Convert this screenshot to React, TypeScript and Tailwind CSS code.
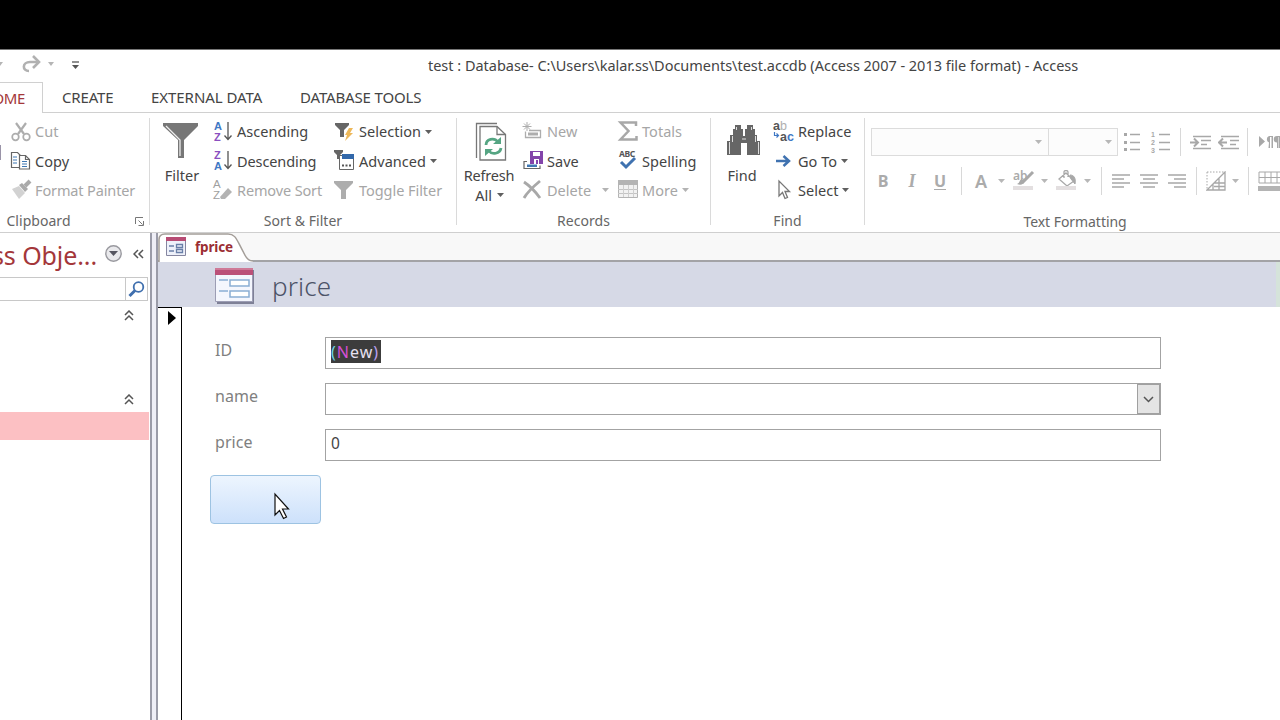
import type { ReactNode } from 'react';

export default function App() {
  return (
    <div className="w-[1280px] h-[720px] overflow-hidden flex flex-col bg-white font-['Noto_Sans','Liberation_Sans',sans-serif] text-[#444444] whitespace-nowrap">
      <div className="h-[49px] shrink-0 bg-black" />
      <TitleBar />
      <Tabs />
      <Ribbon />
      <div className="flex flex-1 min-h-0">
        <NavPane />
        <div className="w-[8px] shrink-0 border-x-2 border-[#9a9ba8] bg-[#eeeef6]" />
        <Document />
      </div>
    </div>
  );
}

function TitleBar() {
  return (
    <div className="h-[33px] shrink-0 flex items-center border-t border-[#777777]">
      <svg className="w-[90px] h-[32px] shrink-0" viewBox="0 0 90 32" fill="none">
        <path d="M-3 12h6l-3 4z" fill="#b5b5b5" />
        <path d="M39 12H30c-8 0-8 9-1 9" stroke="#b1b1b1" strokeWidth="2.6" />
        <path d="M33 6l6 6-6 6" stroke="#b1b1b1" strokeWidth="2.6" />
        <path d="M48 12h6l-3 4z" fill="#b5b5b5" />
        <path d="M72 12h7" stroke="#555555" strokeWidth="1.3" />
        <path d="M72 15h7l-3.5 4z" fill="#555555" />
      </svg>
      <span className="ml-[338px] text-[14.5px] tracking-[-0.02px]">
        test : Database- C:\Users\kalar.ss\Documents\test.accdb (Access 2007 - 2013 file format) - Access
      </span>
    </div>
  );
}

function Tabs() {
  return (
    <div className="h-[31px] shrink-0 flex text-[15px]">
      <div className="w-[43px] shrink-0 border-t border-r border-[#d0d0d0] flex items-center justify-end pr-[17px] text-[#a4373a] tracking-[-0.4px]">
        HOME
      </div>
      <div className="flex flex-1 items-center border-b border-[#d0d0d0] pt-[1px]">
        <span className="w-[89px] pl-[19px] tracking-[-0.15px]">CREATE</span>
        <span className="w-[149px] pl-[19px] tracking-[-0.05px]">EXTERNAL DATA</span>
        <span className="pl-[19px] tracking-[-0.15px]">DATABASE TOOLS</span>
      </div>
    </div>
  );
}

function Separator() {
  return <div className="w-px h-[107px] mt-[5px] shrink-0 bg-[#dadada]" />;
}

function Group({ title, className, children }: { title: string; className: string; children: ReactNode }) {
  return (
    <div className={`shrink-0 flex flex-col pt-[4px] ${className}`}>
      <div className="flex h-[90px] shrink-0">{children}</div>
      <div className="h-[26px] pt-[2px] flex items-center justify-center text-[14px] tracking-[0.05px] text-[#666666]">
        {title}
      </div>
    </div>
  );
}

function Item({
  icon,
  label,
  off,
  arrow,
  spacing = 'tracking-[0.03px]',
  arrowGap = 'ml-[4px]',
}: {
  icon: ReactNode;
  label: string;
  off?: boolean;
  arrow?: boolean;
  spacing?: string;
  arrowGap?: string;
}) {
  return (
    <div className={`flex items-center h-[29.4px] ${off ? 'text-[#a6a6a6]' : 'text-[#444444]'}`}>
      <svg className="w-[22px] h-[22px] mr-[3px] shrink-0 overflow-visible" viewBox="0 0 22 22" fill="none">
        {icon}
      </svg>
      <span className={`pt-[1px] text-[14.5px] ${spacing}`}>{label}</span>
      {arrow && <Arrow className={arrowGap} />}
    </div>
  );
}

function Arrow({ className = '' }: { className?: string }) {
  return (
    <svg className={`w-[7px] h-[4px] shrink-0 opacity-85 ${className}`} viewBox="0 0 7 4">
      <path d="M0 0h7L3.5 4z" fill="currentColor" />
    </svg>
  );
}

function Ribbon() {
  return (
    <div className="h-[120px] shrink-0 flex border-b border-[#cfcfcf]">
      <Group title="Clipboard" className="w-[149px] relative [&>div:last-child]:pr-[72px]">
        <div className="w-[10px] pt-[28px]">
          <div className="w-px h-[15px] bg-[#9a94a8]" />
        </div>
        <div>
          <Item icon={cut} label="Cut" off />
          <Item icon={copy} label="Copy" />
          <Item icon={painter} label="Format Painter" off spacing="tracking-[-0.13px]" />
        </div>
        <svg className="absolute left-[134px] top-[103px] w-[11px] h-[10px]" viewBox="0 0 11 10" fill="none" stroke="#777777">
          <path d="M1.5 8V1.5H9M4.500 4.500l4 4M9.500 5v4.500h-5" />
        </svg>
      </Group>
      <Separator />
      <Group title="Sort & Filter" className="w-[306px]">
        <div className="w-[62px] flex flex-col items-center pt-[6px]">
          <svg className="w-[36px] h-[36px]" viewBox="0 0 36 36">
            <path d="M0 0h35v3L21 17v18h-6V17L0 3z" fill="#777777" />
            <path d="M3 3l14 14v16" fill="none" stroke="#eeeeee" strokeWidth="1.3" />
          </svg>
          <span className="text-[14.5px] leading-[20px] mt-[6px] ml-[2px]">Filter</span>
        </div>
        <div className="w-[122px]">
          <Item icon={sortIcon('A', 'Z', '#3f78c4', '#8b4fc0')} label="Ascending" />
          <Item icon={sortIcon('Z', 'A', '#8b4fc0', '#3f78c4')} label="Descending" spacing="tracking-[-0.1px]" />
          <Item icon={removeSort} label="Remove Sort" off spacing="tracking-[-0.13px]" />
        </div>
        <div>
          <Item icon={selection} label="Selection" arrow />
          <Item icon={advanced} label="Advanced" arrow />
          <Item icon={toggleFilter} label="Toggle Filter" off spacing="tracking-[-0.05px]" />
        </div>
      </Group>
      <Separator />
      <Group title="Records" className="w-[253px]">
        <div className="w-[65px] flex flex-col items-center pt-[5px]">
          <svg className="w-[32px] h-[40px] ml-[2px]" viewBox="0 0 32 40" fill="none">
            <path d="M1.500 36V1.500H22" stroke="#777777" strokeWidth="1.300" />
            <path d="M5 4.500h17l8.500 8v25.500H5z" fill="#fff" stroke="#777777" strokeWidth="1.300" />
            <path d="M22 4.500v8h8.500" stroke="#777777" strokeWidth="1.300" />
            <path d="M11 23c0-6 8-8 12-3M26 26c-1 6-9 7-12 3" stroke="#55a583" strokeWidth="2.800" />
            <path d="M26 15v7h-8zM10 34v-7h8z" fill="#55a583" />
          </svg>
          <span className="text-[14.5px] leading-[20px] mt-[3px] -ml-px tracking-[-0.2px]">Refresh</span>
          <span className="text-[14.5px] leading-[20px] flex items-center">
            All
            <Arrow className="ml-[5px]" />
          </span>
        </div>
        <div className="w-[95px]">
          <Item icon={newRecord} label="New" off />
          <Item icon={save} label="Save" />
          <Item icon={deleteIcon} label="Delete" off arrow arrowGap="ml-[11px]" />
        </div>
        <div>
          <Item icon={totals} label="Totals" off />
          <Item icon={spelling} label="Spelling" />
          <Item icon={more} label="More" off arrow />
        </div>
      </Group>
      <Separator />
      <Group title="Find" className="w-[153px]">
        <div className="w-[62px] flex flex-col items-center pt-[8px]">
          <svg className="w-[34px] h-[32px] ml-[3px]" viewBox="0 0 34 32" fill="#666666">
            <path d="M8 0h6v4h2v7h2V4h2V0h6v4h2v6h2v6h3v14H20V18h-6v12H0V16h3v-6h3V4h2z" />
            <path d="M2.500 17v12M5.500 11v6M31.500 17v12M28.500 11v6M9.500 2v3M24.500 2v3M15 14h4" stroke="#dddddd" />
          </svg>
          <span className="text-[14.5px] leading-[20px] mt-[8px]">Find</span>
        </div>
        <div>
          <Item icon={replace} label="Replace" />
          <Item icon={goTo} label="Go To" arrow />
          <Item icon={selectIcon} label="Select" arrow />
        </div>
      </Group>
      <Separator />
      <TextFormatting />
    </div>
  );
}

function Cell({ className, children }: { className: string; children: ReactNode }) {
  return <div className={`h-full shrink-0 flex items-center justify-center ${className}`}>{children}</div>;
}

function Bar() {
  return <div className="w-px h-[28px] shrink-0 bg-[#d8d8d8]" />;
}

function TextFormatting() {
  return (
    <div className="w-[415px] shrink-0 overflow-hidden text-[#ababab]">
      <div className="h-[28px] mt-[15px] flex items-center">
        <div className="ml-[6px] w-[178px] h-[28px] shrink-0 border border-[#dcdcdc] bg-[#fcfcfc] flex items-center justify-end pr-[6px]">
          <Arrow />
        </div>
        <div className="w-[69px] h-[28px] shrink-0 border border-l-0 border-[#dcdcdc] bg-[#fcfcfc] flex items-center justify-end pr-[5px]">
          <Arrow />
        </div>
        <Cell className="w-[28px]">
          <svg width="18" height="20" fill="none" stroke="#a8a8a8" strokeWidth="1.3">
            <path d="M7 2.500h10M7 10.500h10M7 17.500h10" />
            <path d="M1 2.500h3M1 10.500h3M1 17.500h3" strokeWidth="3" />
          </svg>
        </Cell>
        <Cell className="w-[28px]">
          <svg width="19" height="20" fill="none" stroke="#a8a8a8" strokeWidth="1.3" className="overflow-visible font-['Liberation_Sans',sans-serif]">
            <path d="M8 2.500h11M8 10.500h11M8 17.500h11" />
            <text x="0" y="5" fontSize="7" fontWeight="700" fill="#a8a8a8" stroke="none">1</text>
            <text x="0" y="13" fontSize="7" fontWeight="700" fill="#a8a8a8" stroke="none">2</text>
            <text x="0" y="21" fontSize="7" fontWeight="700" fill="#a8a8a8" stroke="none">3</text>
          </svg>
        </Cell>
        <Cell className="w-[6px]">{null}</Cell>
        <Bar />
        <Cell className="w-[38px]">
          <svg width="21" height="15" fill="none" stroke="#a8a8a8" strokeWidth="1.3">
            <path d="M3 1.500h18M11 5.500h10M11 9.500h6M3 13.500h18" />
            <path d="M0 7.500h8M4 3.500l4 4-4 4" strokeWidth="2" />
          </svg>
        </Cell>
        <Cell className="w-[18px]">
          <svg width="21" height="15" fill="none" stroke="#a8a8a8" strokeWidth="1.3" className="shrink-0">
            <path d="M3 1.500h18M12 5.500h9M12 9.500h6M3 13.500h18" />
            <path d="M9 7.500H1M5 3.500l-4 4 4 4" strokeWidth="2" />
          </svg>
        </Cell>
        <Cell className="w-[10px]">{null}</Cell>
        <Bar />
        <svg width="22" height="14" className="ml-[11px] shrink-0" fill="#a8a8a8">
          <path d="M0 1l6 5.500L0 12zM10 7.500a3.500 3.500 0 0 1 0-6.500h4v12h-1.500V2H11v11H9.500zM18 7.500a3 3 0 0 1 0-6.500h3v12h-1.500V2H19v11h-1z" />
        </svg>
      </div>
      <div className="h-[28px] mt-[11px] pl-[1px] flex items-center text-[16px] font-bold">
        <Cell className="w-[34px]">
          <span className="font-['Open_Sans',sans-serif]">B</span>
        </Cell>
        <Cell className="w-[24px]">
          <span className="font-['Liberation_Serif',serif] italic text-[18px]">I</span>
        </Cell>
        <Cell className="w-[32px]">
          <span className="font-['Open_Sans',sans-serif] leading-[16px] border-b border-[#ababab]">U</span>
        </Cell>
        <Cell className="w-[5px]">{null}</Cell>
        <Bar />
        <Cell className="w-[38px]">
          <span className="text-[18px] font-semibold">A</span>
        </Cell>
        <Arrow className="-ml-[2px]" />
        <svg width="22" height="22" className="ml-[8px] shrink-0 overflow-visible" fill="none">
          <text x="0" y="10" fontSize="12" fontWeight="600" fill="#aaaaaa">ab</text>
          <path d="M20 2L9 13" stroke="#a8a8a8" strokeWidth="3" />
          <path d="M9 9c-3 1-2 4-5 5 4 2 7 0 7-3z" fill="#a8a8a8" />
          <path d="M0 16h20v4H0z" fill="#e3dfe0" />
        </svg>
        <Arrow className="ml-[6px]" />
        <svg width="22" height="22" className="ml-[8px] shrink-0" fill="none" stroke="#a8a8a8">
          <path d="M10 3l8 8-7 5-8-7zM8 8V2c0-2 4-2 4 0v5" strokeWidth="1.300" />
          <path d="M14 5c4 0 6 3 5 9l-4-5z" fill="#a8a8a8" />
          <path d="M0 16h20v4H0z" fill="#e3dfe0" stroke="none" />
        </svg>
        <Arrow className="ml-[6px]" />
        <div className="w-[11px]" />
        <Bar />
        <Cell className="w-[38px]">
          <AlignIcon d="M0 1h18M0 5h12M0 9h18M0 13h12" />
        </Cell>
        <Cell className="w-[18px]">
          <AlignIcon d="M0 1h18M3 5h12M0 9h18M3 13h12" />
        </Cell>
        <Cell className="w-[38px]">
          <AlignIcon d="M0 1h18M6 5h12M0 9h18M6 13h12" />
        </Cell>
        <Bar />
        <svg width="20" height="20" className="ml-[9px] shrink-0" fill="none" stroke="#a8a8a8">
          <path d="M1 1h18M1 1v18" strokeDasharray="1.500 1.500" />
          <path d="M1 19L19 1v18zM8 12h11M13 7v12M7 13v6M8 15.500h11" strokeWidth="1.300" />
        </svg>
        <Arrow className="ml-[6px]" />
        <div className="w-[11px]" />
        <Bar />
        <svg width="22" height="20" className="ml-[9px] shrink-0" fill="none" stroke="#a8a8a8">
          <path d="M1 1h24v11H1zM1 6.500h24M7 1v11M13 1v11M19 1v11" />
          <path d="M0 15h24v5H0z" fill="#b4b4b4" stroke="none" />
        </svg>
      </div>
      <div className="h-[26px] mt-[12px] pl-[5px] pt-[2px] flex items-center justify-center text-[14px] tracking-[-0.05px] text-[#666666]">
        Text Formatting
      </div>
    </div>
  );
}

function AlignIcon({ d }: { d: string }) {
  return (
    <svg width="18" height="14" fill="none" stroke="#a8a8a8" strokeWidth="1.3" className="shrink-0">
      <path d={d} />
    </svg>
  );
}

function NavPane() {
  return (
    <div className="w-[150px] shrink-0">
      <div className="h-[44px] flex items-center text-[#a4373a]">
        <div className="w-[97px] pt-[2px] flex justify-end text-[25px] tracking-[-0.1px] shrink-0">
          <span>Access Obje...</span>
        </div>
        <svg className="ml-[8px] w-[17px] h-[17px] shrink-0 -mt-[3px]" viewBox="0 0 17 17">
          <circle cx="8.500" cy="8.500" r="7.700" fill="#e9e9ec" stroke="#99999f" strokeWidth="1.400" />
          <path d="M4 6h9l-4.500 5z" fill="#555560" />
        </svg>
        <svg className="ml-[11px] -mt-[2px] w-[11px] h-[10px]" viewBox="0 0 11 10" fill="none" stroke="#555555" strokeWidth="1.500">
          <path d="M5 1L1 5l4 4M10 1L6 5l4 4" />
        </svg>
      </div>
      <div className="w-[148px] h-[24px] border border-l-0 border-[#c8c8c8] flex justify-end">
        <div className="w-[22px] border-l border-[#c8c8c8] flex items-center justify-center">
          <svg className="w-[17px] h-[17px]" viewBox="0 0 17 17" fill="none" stroke="#3f6fae">
            <circle cx="10.500" cy="6" r="4.800" strokeWidth="1.800" />
            <path d="M7 9.500L1.500 15" strokeWidth="3" />
          </svg>
        </div>
      </div>
      <div className="h-[111px] flex flex-col justify-between items-end pr-[16px] pt-[9px] pb-[7px]">
        <Chevrons />
        <Chevrons />
      </div>
      <div className="w-[149px] h-[28px] bg-[#fcc0c3]" />
    </div>
  );
}

function Chevrons() {
  return (
    <svg className="w-[10px] h-[11px]" viewBox="0 0 10 11" fill="none" stroke="#555555" strokeWidth="1.500">
      <path d="M1 5l4-4 4 4M1 10l4-4 4 4" />
    </svg>
  );
}

function FormGlyph({ className }: { className: string }) {
  return (
    <svg className={className} viewBox="0 0 40 36" fill="none">
      <path d="M2 2h37v34H2z" fill="#7e8096" />
      <path d="M.5.500h37v33H.5z" fill="#f4f6fd" stroke="#9c9db4" />
      <path d="M0 0h38v7H0z" fill="#bb5078" />
      <path d="M0 0h38v2H0z" fill="#ce7997" />
      <path d="M4 12h9M4 23h9" stroke="#8aaed4" strokeWidth="1.400" />
      <path d="M15 12h19v6H15zM15 23h19v6H15z" fill="#fff" stroke="#8aaed4" strokeWidth="1.500" />
    </svg>
  );
}

function Document() {
  return (
    <div className="flex-1 min-w-0 flex flex-col">
      <div className="h-[29px] shrink-0 relative flex items-center bg-[#f8f8f8] border-b-2 border-[#a3a3a6]">
        <svg className="absolute left-0 top-0 w-[96px] h-[29px]" viewBox="0 0 96 30" preserveAspectRatio="none">
          <path d="M1 30V7Q1 1 7 1h63c6 0 8 4 11 10l6 12c2 4 4 6 8 6v1z" fill="#ffffff" />
          <path d="M1 30V7Q1 1 7 1h63c6 0 8 4 11 10l6 12c2 4 4 6 8 6" fill="none" stroke="#a39d98" strokeWidth="1.500" />
        </svg>
        <svg className="relative ml-[8px] w-[20px] h-[19px]" viewBox="0 0 20 19" fill="none">
          <path d="M.5.500h19v18H.5z" fill="#eef1fa" stroke="#8586a0" />
          <path d="M0 0h20v4H0z" fill="#b84c74" />
          <path d="M3 9h5M3 14h5" stroke="#697fa8" strokeWidth="1.300" />
          <path d="M10.500 7.500h6v3h-6zM10.500 12.500h6v3h-6z" stroke="#697fa8" strokeWidth="1.300" />
        </svg>
        <span className="relative ml-[9px] mt-[2px] text-[13.5px] font-bold tracking-[-0.15px] text-[#9b2d33]">fprice</span>
      </div>
      <div className="h-[45px] shrink-0 bg-[#d6d9e6] flex items-center">
        <FormGlyph className="ml-[57px] mt-[2px] w-[40px] h-[36px] shrink-0" />
        <span className="ml-[17px] pt-[3px] text-[26px] font-light tracking-[0.1px] text-[#4c5368]">price</span>
        <div className="ml-auto w-[4px] h-full bg-[#d5e3da]" />
      </div>
      <div className="flex flex-1">
        <div className="w-[24px] shrink-0 border-t border-r border-black">
          <svg className="ml-[10px] mt-[3px] w-[8px] h-[14px]" viewBox="0 0 8 14">
            <path d="M0 0l8 7-8 7z" />
          </svg>
        </div>
        <div className="pl-[28px] pt-[30px]">
          <Field label="ID">
            <span className="ml-[5px] -mt-[4px] h-[23px] w-[50px] bg-[#3c3c3c] text-[16px] leading-[24px] tracking-[1px] text-[#e6e0f0]">
              <span className="text-[#6cd5e8]">(</span>
              <span className="text-[#d64fd6]">N</span>ew<span className="text-[#b9a0f0]">)</span>
            </span>
          </Field>
          <Field label="name">
            <div className="ml-auto w-[23px] h-full border border-[#a0a0a0] bg-[#e4e4e4] flex items-center justify-center">
              <svg className="w-[11px] h-[7px]" viewBox="0 0 11 7" fill="none" stroke="#555555" strokeWidth="1.500">
                <path d="M1 1l4.500 4.500L10 1" />
              </svg>
            </div>
          </Field>
          <Field label="price">
            <span className="ml-[5px] text-[15.5px] -mt-[2px]">0</span>
          </Field>
          <button className="relative block w-[111px] h-[49px] rounded-[4px] border border-[#9dc3e2] bg-linear-to-b from-[#edf5fe] to-[#cde1fb]">
            <svg className="absolute left-[62px] top-[16px] w-[18px] h-[29px]" viewBox="0 0 18 29">
              <path d="M2 2v21l4.500-4.500 4 8 3-1.500-4-8h6z" fill="#fff" stroke="#111" strokeWidth="1.200" />
            </svg>
          </button>
        </div>
      </div>
    </div>
  );
}

function Field({ label, children }: { label: string; children: ReactNode }) {
  return (
    <div className="h-[46px] flex pl-[5px]">
      <span className="w-[110px] pt-[1px] text-[16px] tracking-[0.05px] text-[#808080]">{label}</span>
      <div className="w-[836px] h-[32px] border border-[#a3a3a3] flex items-center">{children}</div>
    </div>
  );
}

function sortIcon(top: string, bottom: string, topColor: string, bottomColor: string) {
  return (
    <>
      <g className="font-['Liberation_Sans',sans-serif]" fontSize="11" fontWeight="700">
        <text x="2" y="9" fill={topColor}>{top}</text>
        <text x="2" y="20" fill={bottomColor}>{bottom}</text>
      </g>
      <path d="M16 1v17M12.500 14.500l3.500 4 3.500-4" stroke="#555555" strokeWidth="1.300" />
    </>
  );
}

const cut = (
  <g stroke="#adadad" strokeWidth="1.700">
    <path d="M6 2l8 11M16 2l-8 11" strokeWidth="2.200" />
    <circle cx="5.500" cy="16" r="3.300" />
    <circle cx="16.500" cy="16" r="3.300" />
  </g>
);

const copy = (
  <g stroke="#666666" strokeWidth="1.200">
    <path d="M1.500 2.500h6l3 3v12h-9z" fill="#fff" />
    <path d="M9.500 5.500h6l4 4v9.500h-10z" fill="#fff" />
    <path d="M15.500 5.500v4h4" />
    <path d="M3 7h4M3 10h4M3 13h4M12 11.500h5M12 14h5M12 16.500h5" stroke="#3f78b4" />
  </g>
);

const painter = (
  <>
    <path d="M2 10l7-3 6 7-6 6z" fill="#d2d2d2" />
    <path d="M9 6l3-2 6 6-3 3z" fill="#aaaaaa" />
    <path d="M15 7l5-5" stroke="#aaaaaa" strokeWidth="4" />
  </>
);

const removeSort = (
  <>
    <g className="font-['Liberation_Sans',sans-serif]" fontSize="11.500" fill="#a0a0a0">
      <text x="1" y="9">A</text>
      <text x="1" y="20">Z</text>
    </g>
    <path d="M8 18l8-9 4 4-7 7h-4z" fill="#b3b3b3" />
  </>
);

const selection = (
  <>
    <path d="M1 2h14v2l-5 5v7H6V9L1 4z" fill="#666666" />
    <path d="M15 7h4l-3 5h3l-8 8 2-6h-2z" fill="#edb85a" />
  </>
);

const advanced = (
  <>
    <path d="M5.500 5.500h14v14h-14z" fill="#fff" stroke="#666666" />
    <path d="M8 4h12v5H8z" fill="#3268aa" />
    <path d="M0 0h9v2L6 5v4H3V5L0 2z" fill="#666666" />
    <path d="M8 15.500h2M11.500 15.500h2M15 15.500h2" stroke="#555555" strokeWidth="2" />
  </>
);

const toggleFilter = <path d="M0 2h19v2l-7 7v9H7v-9L0 4z" fill="#adadad" />;

const newRecord = (
  <g stroke="#adadad">
    <path d="M7 9.500h11.500v7H3.500v-6" strokeWidth="1.300" />
    <path d="M6 13h10" strokeWidth="3" />
    <path d="M5 1v9M.500 5.500h9M2 2.500l6 6M8 2.500l-6 6" />
  </g>
);

const save = (
  <>
    <path d="M5 11.500H2v7h16v-3" stroke="#666666" strokeWidth="1.200" />
    <path d="M5 14.500h10v2.500H5z" fill="#3f78b4" />
    <path d="M8 1h13v13H8z" fill="#8344aa" />
    <path d="M11 2h7v4h-7zM12 9h5v5h-5z" fill="#fff" />
    <path d="M14 10h2v4h-2z" fill="#8344aa" />
  </>
);

const deleteIcon = <path d="M2 3c6 4 11 9 16 16M18 2C12 7 6 12 2 19" stroke="#a8a8a8" strokeWidth="2.800" />;

const totals = (
  <path d="M19 5V1.500H3.500l8 8.500-8 8.500H19.500V15" stroke="#a8a8a8" strokeWidth="2.500" />
);

const spelling = (
  <>
    <text x="2" y="7" fontSize="8.500" fontWeight="700" fill="#555555" letterSpacing="-0.400">ABC</text>
    <path d="M4 12l5 5 9-9" stroke="#3f72b0" strokeWidth="3" />
  </>
);

const more = (
  <g stroke="#b4b4b4">
    <path d="M1.500 1.500h19v17h-19z" fill="#f2f2f2" />
    <path d="M1 1h20v5H1z" fill="#b4b4b4" stroke="none" />
    <path d="M1 10.500h20M1 14.500h20" stroke="#c4c4c4" />
    <path d="M6.500 6v12M11.500 6v12M16.500 6v12" stroke="#cfcfcf" />
  </g>
);

const replace = (
  <g className="font-['Liberation_Sans',sans-serif]" fontSize="12.500" fontWeight="700" fill="#555555">
    <text x="0" y="9">
      a<tspan fill="#b0b0b0" fontWeight="400">b</tspan>
    </text>
    <text x="7" y="19.500">
      a<tspan fill="#3f78c4">c</tspan>
    </text>
    <path d="M1.500 11v3.500h4M3.500 12.500l2 2-2 2" stroke="#3f78c4" strokeWidth="1.200" fill="none" />
  </g>
);

const goTo = <path d="M3 11h13M10.500 6l5.500 5-5.500 5" stroke="#3f72b0" strokeWidth="2.500" />;

const selectIcon = (
  <path d="M6 2v15l3.500-3.500 2.500 6 2.500-1-2.500-6h4.500z" fill="#fff" stroke="#777777" strokeWidth="1.300" />
);
